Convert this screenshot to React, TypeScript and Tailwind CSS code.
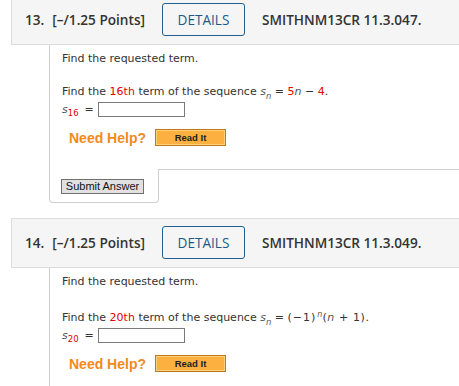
import React from "react";

const body = { fontFamily: '"DejaVu Sans", Verdana, sans-serif' };
const arial = { fontFamily: '"Liberation Sans", Arial, sans-serif' };
const open = { fontFamily: '"Open Sans", sans-serif' };

function Header({ num, code }: { num: string; code: string }) {
  return (
    <div
      className="ml-[11px] flex items-center border-y border-l border-[#dcdcdc] bg-[#f5f5f5] pl-[13px] pt-[7px] pb-[8px] text-[13.6px] font-semibold text-[#333]"
      style={open}
    >
      <span>{num}</span>
      <span className="ml-[8px]">[–/1.25 Points]</span>
      <span
        className="ml-[17px] flex h-[33px] w-[83px] items-center justify-center rounded-[3px] border border-[#1f5f91] font-normal text-[#1d5a8a]"
      >
        DETAILS
      </span>
      <span className="ml-[17px]">{code}</span>
    </div>
  );
}

function Red({ children }: { children: React.ReactNode }) {
  return <span className="text-[#e30000]">{children}</span>;
}

function Sub({ children, red }: { children: React.ReactNode; red?: boolean }) {
  return (
    <span
      className={
        "relative top-[4px] text-[8.5px] leading-none " + (red ? "text-[#e30000]" : "italic text-[#555]")
      }
    >
      {children}
    </span>
  );
}

function InputRow({ sub }: { sub: string }) {
  return (
    <div className="mt-[3px] flex h-[15px] items-center">
      <span className="italic text-[#555]">s</span>
      <Sub red>{sub}</Sub>
      <span className="ml-[6px]">=</span>
      <span className="ml-[4px] h-[15px] w-[87px] border border-[#7a7a7a] bg-white" />
    </div>
  );
}

function HelpRow() {
  return (
    <div className="mt-[12px] ml-[7px] flex h-[17px] items-center">
      <span className="text-[14px] font-bold leading-none text-[#f08a1c]" style={arial}>
        Need Help?
      </span>
      <span
        className="ml-[9px] flex h-[17px] w-[71px] items-center justify-center border border-[#c27818] bg-[#fbb040] text-[9.5px] font-bold leading-none text-[#222] shadow-[inset_0_0_0_1px_#fdd07c]"
        style={arial}
      >
        Read It
      </span>
    </div>
  );
}

export default function App() {
  return (
    <div className="h-[386px] overflow-hidden bg-white text-[11px] leading-[14px] text-[#333]" style={body}>
      <div className="-mt-[5px]">
        <Header num="13." code="SMITHNM13CR 11.3.047." />
        <div className="ml-[49px] border-b border-l border-[#cfcfcf] pb-[23px] pl-[12px] pt-[7px]">
          <p>Find the requested term.</p>
          <p className="mt-[19px]">
            Find the <Red>16th</Red> term of the sequence <span className="italic text-[#555]">s</span>
            <Sub>n</Sub> = <Red>5</Red>
            <span className="italic text-[#555]">n</span> − <Red>4</Red>.
          </p>
          <InputRow sub="16" />
          <HelpRow />
        </div>
        <div className="relative -mt-px ml-[49px] w-[110px] rounded-b-[4px] border-x border-b border-[#cfcfcf] bg-white pb-[8px] pl-[11px] pt-[10px]">
          <span
            className="flex h-[15px] w-[83px] items-center justify-center border border-[#707070] bg-[#e1e1e1] text-[11px] leading-none text-[#111]"
            style={arial}
          >
            Submit Answer
          </span>
        </div>
        <div className="mt-[15px]">
          <Header num="14." code="SMITHNM13CR 11.3.049." />
          <div className="ml-[49px] border-l border-[#cfcfcf] pb-[40px] pl-[12px] pt-[7px]">
            <p>Find the requested term.</p>
            <p className="mt-[22px]">
              Find the <Red>20th</Red> term of the sequence <span className="italic text-[#555]">s</span>
              <Sub>n</Sub> = <span className="tracking-[1px]">(−1)</span>
              <span className="relative -top-[4px] ml-px text-[8px] italic leading-none text-[#555]">n</span>
              <span className="tracking-[0.6px]">
                (<span className="italic text-[#555]">n</span> + 1).
              </span>
            </p>
            <InputRow sub="20" />
            <HelpRow />
          </div>
        </div>
      </div>
    </div>
  );
}
